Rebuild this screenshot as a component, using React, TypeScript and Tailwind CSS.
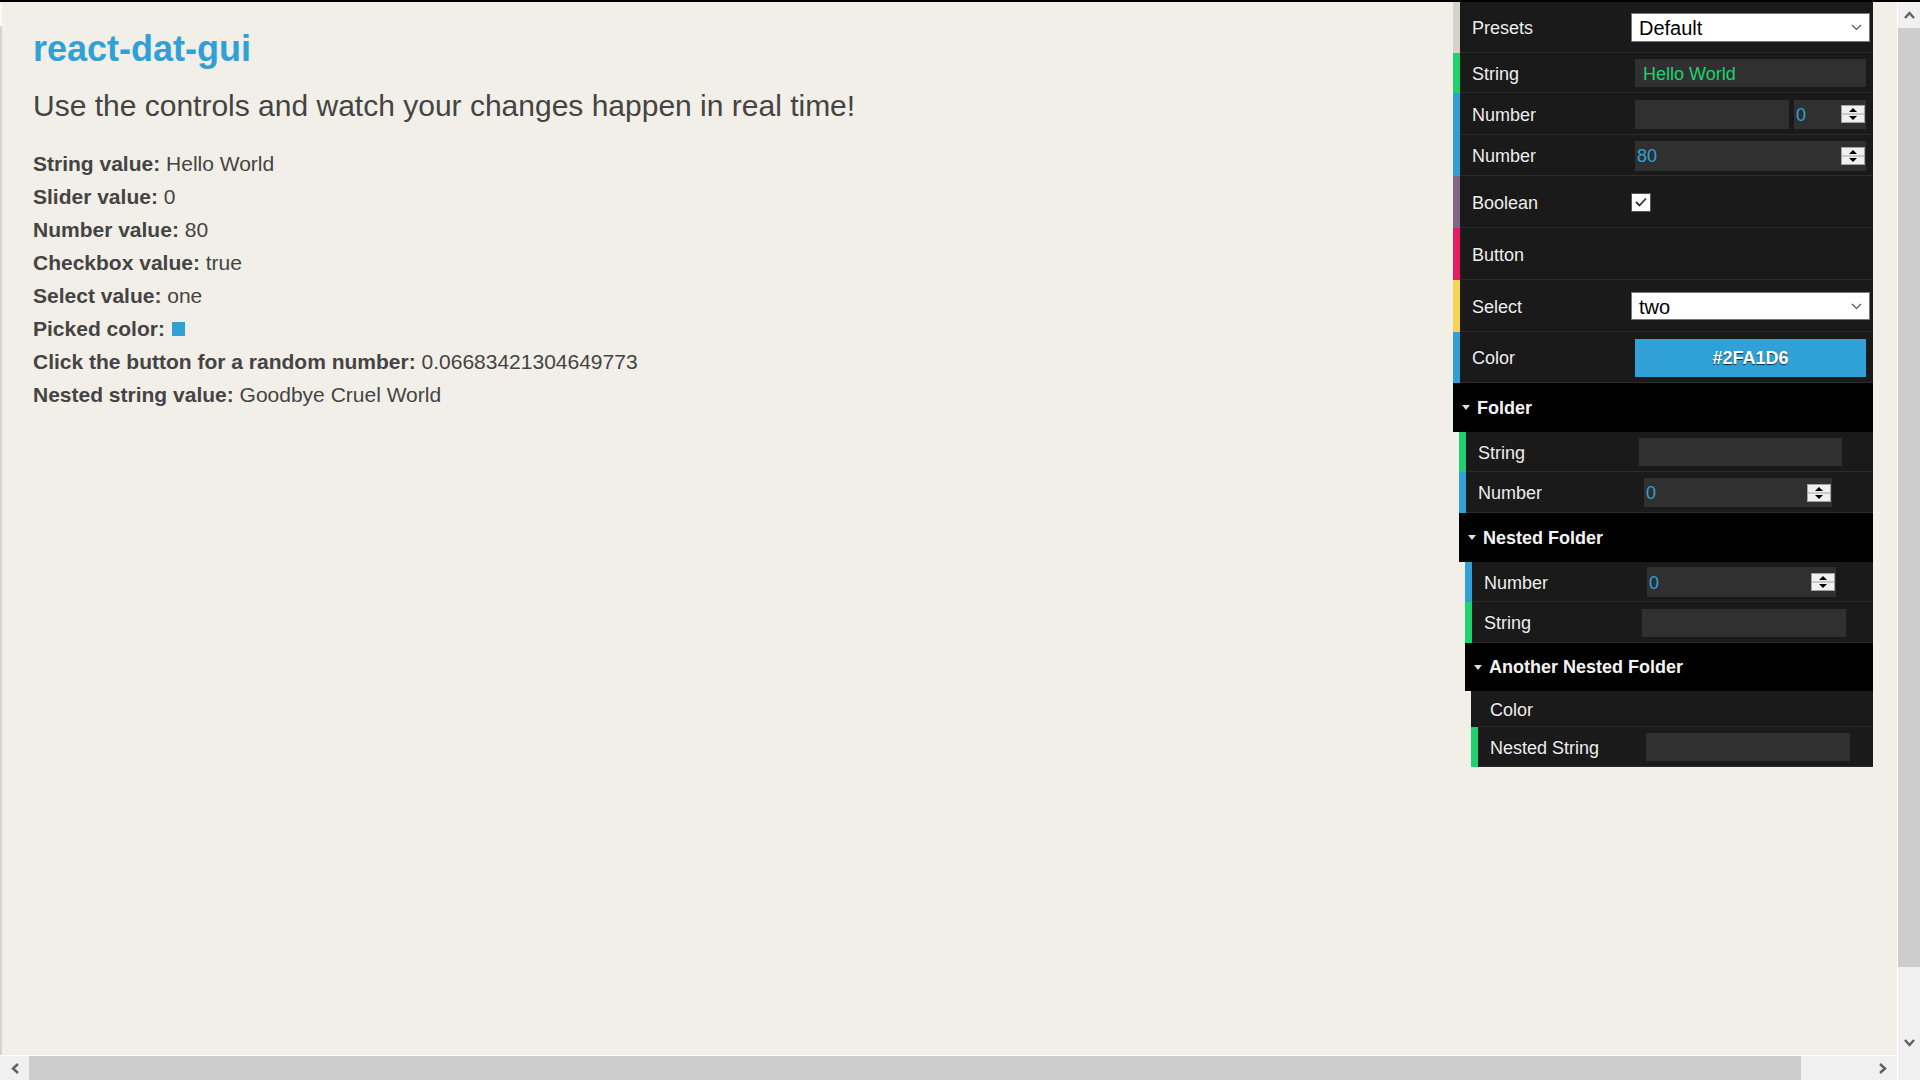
import React from "react";

const values = [
  { label: "String value:", value: "Hello World" },
  { label: "Slider value:", value: "0" },
  { label: "Number value:", value: "80" },
  { label: "Checkbox value:", value: "true" },
  { label: "Select value:", value: "one" },
];

// native spin buttons of a number input
function Spinner() {
  return (
    <svg width="24" height="18" viewBox="0 0 24 18" className="shrink-0">
      <rect x="0.5" y="0.5" width="23" height="17" fill="#f0f0f0" stroke="#a3a3a3" />
      <line x1="1" y1="9" x2="23" y2="9" stroke="#a3a3a3" />
      <polygon points="8,7 16,7 12,3" fill="#000" />
      <polygon points="8,11 16,11 12,15" fill="#000" />
    </svg>
  );
}

function Chevron({ dir }: { dir: "up" | "down" | "left" | "right" }) {
  const pts = {
    up: "1,8 5.5,3 10,8",
    down: "1,2 5.5,7 10,2",
    left: "8,1 3,5.5 8,10",
    right: "2,1 7,5.5 2,10",
  }[dir];
  const vertical = dir === "up" || dir === "down";
  return (
    <svg width={vertical ? 11 : 10} height={vertical ? 10 : 11} viewBox={vertical ? "0 0 11 10" : "0 0 10 11"}>
      <polyline points={pts} fill="none" stroke="#606060" strokeWidth="2.4" />
    </svg>
  );
}

interface rowProps {
  strip: string;
  h: string;
  labelW: string;
  label: string;
  children?: React.ReactNode;
}

function Row({ strip, h, labelW, label, children }: rowProps) {
  return (
    <div className={`flex ${h}`}>
      <div className={`w-[7px] shrink-0 ${strip}`} />
      <div className="flex flex-1 items-center border-b border-[#2c2c2c] bg-[#1a1a1a]">
        <div className={`shrink-0 pl-3 pt-[3px] text-[18px] text-[#eee] [text-shadow:0_-1px_0_#111] ${labelW}`}>
          {label}
        </div>
        {children}
      </div>
    </div>
  );
}

function TextBox({ w, value }: { w: string; value?: string }) {
  return (
    <div className={`mt-[1px] flex h-[28px] items-center bg-[#303030] pl-2 pt-[2px] text-[18px] text-[#1ed36f] ${w}`}>
      {value}
    </div>
  );
}

function NumberBox({ w, h, value }: { w: string; h: string; value: string }) {
  return (
    <div className={`mt-[1px] flex items-center justify-between bg-[#303030] pl-[2px] pr-[1px] text-[18px] text-[#2fa1d6] ${w} ${h}`}>
      <span className="pt-[2px]">{value}</span>
      <Spinner />
    </div>
  );
}

function SelectBox({ h, value }: { h: string; value: string }) {
  return (
    <div className={`mt-[1px] flex w-[239px] items-center justify-between border border-[#767676] bg-white pl-[7px] pr-[7px] text-[20px] text-black ${h}`}>
      <span className="pt-[1px]">{value}</span>
      <svg width="11" height="7" viewBox="0 0 11 7">
        <polyline points="1,1 5.5,5.5 10,1" fill="none" stroke="#555" strokeWidth="1.2" />
      </svg>
    </div>
  );
}

function FolderTitle({ title, h }: { title: string; h: string }) {
  return (
    <div className={`flex items-center bg-black pl-[9px] ${h}`}>
      <svg width="8" height="5" viewBox="0 0 8 5" className="shrink-0">
        <polygon points="0,0 8,0 4,5" fill="#ddd" />
      </svg>
      <span className="ml-[7px] pt-[1px] text-[18px] font-bold text-[#f2f2f2] [text-shadow:0_-1px_0_#111]">{title}</span>
    </div>
  );
}

function Panel() {
  return (
    <div className="mr-[24px] flex w-[420px] shrink-0 flex-col self-start">
      <Row strip="bg-[#d6d2ca]" h="h-[51px]" labelW="w-[171px]" label="Presets">
        <SelectBox h="h-[29px]" value="Default" />
      </Row>
      <Row strip="bg-[#1ed36f]" h="h-[40px]" labelW="w-[175px]" label="String">
        <TextBox w="w-[231px]" value="Hello World" />
      </Row>
      <Row strip="bg-[#2fa1d6]" h="h-[42px]" labelW="w-[175px]" label="Number">
        <div className="mt-[1px] h-[29px] w-[154px] bg-[#303030]" />
        <div className="ml-[5px]">
          <NumberBox w="w-[72px]" h="h-[29px]" value="0" />
        </div>
      </Row>
      <Row strip="bg-[#2fa1d6]" h="h-[41px]" labelW="w-[175px]" label="Number">
        <NumberBox w="w-[231px]" h="h-[30px]" value="80" />
      </Row>
      <Row strip="bg-[#806787]" h="h-[52px]" labelW="w-[171px]" label="Boolean">
        <div className="mt-[1px] flex h-[19px] w-[20px] items-center justify-center border border-[#555] bg-white">
          <svg width="14" height="12" viewBox="0 0 14 12">
            <polyline points="2,6 5.5,9.5 12,2.5" fill="none" stroke="#333" strokeWidth="1.8" />
          </svg>
        </div>
      </Row>
      <Row strip="bg-[#e61d5f]" h="h-[52px]" labelW="w-[171px]" label="Button" />
      <Row strip="bg-[#f4d450]" h="h-[52px]" labelW="w-[171px]" label="Select">
        <SelectBox h="h-[28px]" value="two" />
      </Row>
      <Row strip="bg-[#2fa1d6]" h="h-[51px]" labelW="w-[175px]" label="Color">
        <div className="mt-[1px] flex h-[38px] w-[231px] items-center justify-center bg-[#2fa1d6] pt-[1px] text-[18px] font-bold text-white [text-shadow:0_1px_1px_rgba(0,0,0,0.7)]">
          #2FA1D6
        </div>
      </Row>

      {/* Folder */}
      <FolderTitle title="Folder" h="h-[49px]" />
      <div className="ml-[6px] flex flex-col">
        <Row strip="bg-[#1ed36f]" h="h-[40px]" labelW="w-[173px]" label="String">
          <TextBox w="w-[203px]" />
        </Row>
        <Row strip="bg-[#2fa1d6]" h="h-[41px]" labelW="w-[178px]" label="Number">
          <NumberBox w="w-[188px]" h="h-[29px]" value="0" />
        </Row>

        {/* Nested Folder */}
        <FolderTitle title="Nested Folder" h="h-[49px]" />
        <div className="ml-[6px] flex flex-col">
          <Row strip="bg-[#2fa1d6]" h="h-[40px]" labelW="w-[175px]" label="Number">
            <NumberBox w="w-[189px]" h="h-[30px]" value="0" />
          </Row>
          <Row strip="bg-[#1ed36f]" h="h-[41px]" labelW="w-[170px]" label="String">
            <TextBox w="w-[204px]" />
          </Row>

          {/* Another Nested Folder */}
          <FolderTitle title="Another Nested Folder" h="h-[48px]" />
          <div className="ml-[6px] flex flex-col">
            <Row strip="bg-[#1a1a1a]" h="h-[36px]" labelW="w-[168px]" label="Color" />
            <Row strip="bg-[#1ed36f]" h="h-[40px]" labelW="w-[168px]" label="Nested String">
              <TextBox w="w-[204px]" />
            </Row>
          </div>
        </div>
      </div>
    </div>
  );
}

export default function App() {
  return (
    <div className="flex h-screen w-screen flex-col overflow-hidden bg-[#f2eee8] font-['Liberation_Sans',Arial,sans-serif]">
      <div className="h-[2px] shrink-0 bg-black" />
      <div className="flex min-h-0 flex-1">
        <div className="flex min-w-0 flex-1 flex-col border-r border-white">
          <div className="flex min-h-0 flex-1 border-b border-white">
            {/* frame edge */}
            <div className="flex w-[2px] shrink-0 flex-col">
              <div className="h-[24px] bg-[#f8f8f8]" />
              <div className="flex-1 bg-[#d3d3d3]" />
            </div>

            <main className="min-w-0 flex-1 pl-[31px] pt-[25px] text-[#444]">
              <h1 className="text-[36px] font-bold leading-[43px] text-[#2fa1d6]">react-dat-gui</h1>
              <h2 className="mt-[18px] text-[30px] leading-[36px]">
                Use the controls and watch your changes happen in real time!
              </h2>
              <div className="mt-[23px] flex flex-col text-[21px] leading-[33px]">
                {values.map((v) => (
                  <p key={v.label}>
                    <b>{v.label}</b> {v.value}
                  </p>
                ))}
                <p className="flex items-center">
                  <b>Picked color:</b>
                  <span className="ml-[7px] inline-block h-[14px] w-[13px] bg-[#2fa1d6]" />
                </p>
                <p>
                  <b>Click the button for a random number:</b> 0.06683421304649773
                </p>
                <p>
                  <b>Nested string value:</b> Goodbye Cruel World
                </p>
              </div>
            </main>

            <Panel />
          </div>

          {/* horizontal scrollbar */}
          <div className="flex h-[24px] shrink-0 bg-[#f0f0f0]">
            <div className="flex w-[29px] items-center justify-center">
              <Chevron dir="left" />
            </div>
            <div className="w-[1772px] bg-[#cdcdcd]" />
            <div className="flex-1" />
            <div className="flex w-[28px] items-center justify-center">
              <Chevron dir="right" />
            </div>
          </div>
        </div>

        {/* vertical scrollbar */}
        <div className="flex w-[22px] shrink-0 flex-col bg-[#f0f0f0]">
          <div className="flex h-[26px] items-center justify-center">
            <Chevron dir="up" />
          </div>
          <div className="h-[939px] bg-[#cdcdcd]" />
          <div className="flex-1" />
          <div className="flex h-[26px] items-center justify-center">
            <Chevron dir="down" />
          </div>
          <div className="h-[24px]" />
        </div>
      </div>
    </div>
  );
}
